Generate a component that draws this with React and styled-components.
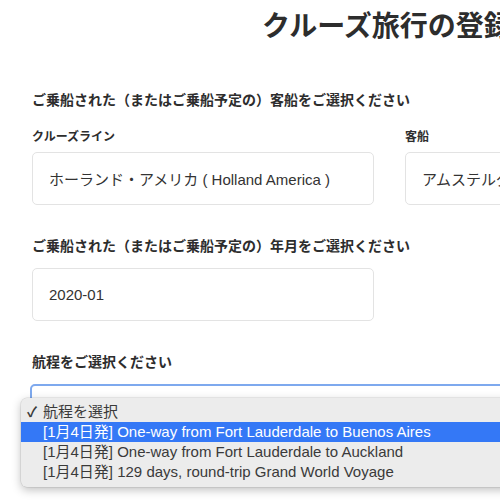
import React from 'react'
import styled, { createGlobalStyle } from 'styled-components'

const GlobalStyle = createGlobalStyle`
  html, body {
    margin: 0;
    background: #fff;
    overflow: hidden;
  }
  body {
    font-family: "Liberation Sans", "Noto Sans CJK JP", sans-serif;
    color: #333;
  }
`

const Page = styled.div`
  width: 500px;
  height: 500px;
  overflow: hidden;
`

const Title = styled.h1`
  margin: 0;
  padding: 10px 0 0 262px;
  font-size: 28px;
  line-height: 34px;
  font-weight: 700;
  white-space: nowrap;
  color: #2d2d2d;
`

const Form = styled.div`
  padding: 47px 0 0 32px;
`

const Section = styled.section`
  margin-bottom: ${(p) => p.$gap || 30}px;
`

const Heading = styled.h2`
  margin: 0 0 ${(p) => p.$below || 12}px;
  font-size: 14px;
  line-height: 18px;
  font-weight: 700;
  white-space: nowrap;
  color: #2d2d2d;
`

const Row = styled.div`
  display: grid;
  grid-template-columns: 342px 342px;
  column-gap: 31px;
`

const Label = styled.div`
  font-size: 12px;
  line-height: 16px;
  font-weight: 700;
  margin-bottom: 7px;
  color: #2d2d2d;
`

const Field = styled.div`
  box-sizing: border-box;
  width: ${(p) => p.$width || 342}px;
  height: 53px;
  display: flex;
  align-items: center;
  padding: 0 16px;
  border: 1px solid #e3e3e3;
  border-radius: 5px;
  font-size: 15px;
  white-space: nowrap;
  overflow: hidden;
  color: #333;
`

const SelectWrap = styled.div`
  position: relative;
  margin-left: -2px;
`

const Select = styled.div`
  box-sizing: border-box;
  width: 520px;
  height: 53px;
  border: 2px solid #7ea9ee;
  border-radius: 5px;
`

const Menu = styled.ul`
  position: absolute;
  top: 14px;
  left: -9px;
  width: 520px;
  margin: 0;
  padding: 4px 0 5px;
  list-style: none;
  background: #ececec;
  border-radius: 6px;
  box-shadow: 0 3px 10px rgba(0, 0, 0, 0.25), 0 0 0 0.5px rgba(0, 0, 0, 0.12);
`

const Option = styled.li`
  position: relative;
  height: 20px;
  line-height: 20px;
  padding-left: 22px;
  font-size: 15px;
  white-space: nowrap;
  color: ${(p) => (p.$active ? '#fff' : '#3a3a3a')};
  background: ${(p) => (p.$active ? '#3478f6' : 'transparent')};
`

const Check = styled.span`
  position: absolute;
  left: 6px;
  top: 0;
  font-size: 14px;
  font-weight: 700;
`

const routes = [
  { text: '航程を選択', checked: true },
  { text: '[1月4日発] One-way from Fort Lauderdale to Buenos Aires', active: true },
  { text: '[1月4日発] One-way from Fort Lauderdale to Auckland' },
  { text: '[1月4日発] 129 days, round-trip Grand World Voyage' },
]

export default function App() {
  return (
    <Page>
      <GlobalStyle />
      <Title>クルーズ旅行の登録</Title>
      <Form>
        <Section $gap={32}>
          <Heading $below={20}>ご乗船された（またはご乗船予定の）客船をご選択ください</Heading>
          <Row>
            <div>
              <Label>クルーズライン</Label>
              <Field>ホーランド・アメリカ ( Holland America )</Field>
            </div>
            <div>
              <Label>客船</Label>
              <Field>アムステルダム ( Amsterdam )</Field>
            </div>
          </Row>
        </Section>
        <Section $gap={32}>
          <Heading $below={13}>ご乗船された（またはご乗船予定の）年月をご選択ください</Heading>
          <Field>2020-01</Field>
        </Section>
        <Section>
          <Heading $below={13}>航程をご選択ください</Heading>
          <SelectWrap>
            <Select />
            <Menu>
              {routes.map((r) => (
                <Option key={r.text} $active={r.active}>
                  {r.checked && <Check>✓</Check>}
                  {r.text}
                </Option>
              ))}
            </Menu>
          </SelectWrap>
        </Section>
      </Form>
    </Page>
  )
}
